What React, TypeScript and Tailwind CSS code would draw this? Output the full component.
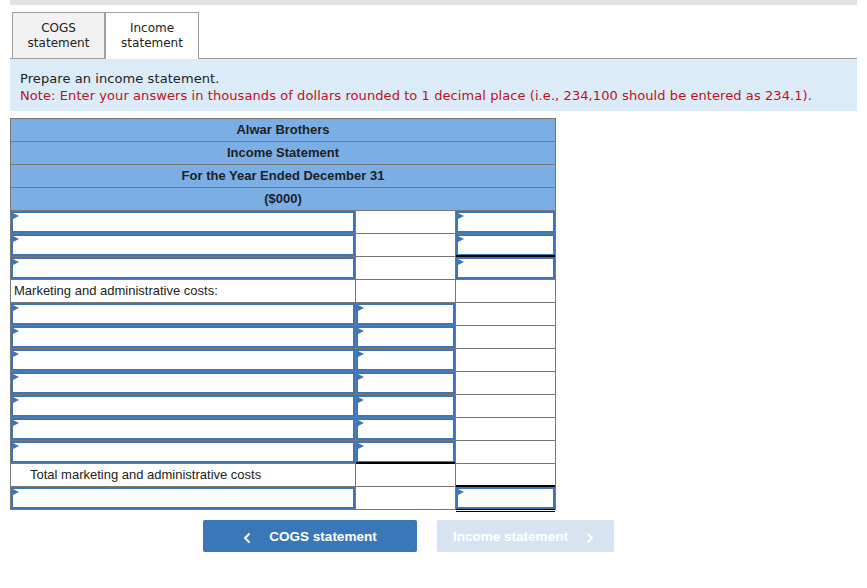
import { ChevronLeft, ChevronRight } from 'lucide-react'

type Cell = { input?: boolean; text?: string; indent?: boolean; topBlack?: boolean; dbl?: boolean }
type Row = [Cell, Cell, Cell]

const ROWS: Row[] = [
  [{ input: true }, {}, { input: true }],
  [{ input: true }, {}, { input: true }],
  [{ input: true }, {}, { input: true, topBlack: true }],
  [{ text: 'Marketing and administrative costs:' }, {}, {}],
  [{ input: true }, { input: true }, {}],
  [{ input: true }, { input: true }, {}],
  [{ input: true }, { input: true }, {}],
  [{ input: true }, { input: true }, {}],
  [{ input: true }, { input: true }, {}],
  [{ input: true }, { input: true }, {}],
  [{ input: true }, { input: true }, {}],
  [{ text: 'Total marketing and administrative costs', indent: true }, { topBlack: true }, {}],
  [{ input: true }, {}, { input: true, topBlack: true, dbl: true }],
]

const WIDTHS = ['w-[345px]', 'w-[100px]', 'w-[99px]']

function InputBox() {
  return (
    <div className="relative w-full h-full border-2 border-[#3f74b5] bg-white">
      <span className="absolute left-0 top-0 w-0 h-0 border-y-[3px] border-y-transparent border-l-[6px] border-l-[#3f74b5]" />
    </div>
  )
}

function BodyCell({ cell, i }: { cell: Cell; i: number }) {
  return (
    <div className={`relative h-full shrink-0 ${WIDTHS[i]} ${i < 2 ? 'border-r border-[#777]' : ''}`}>
      {cell.topBlack && <div className="absolute -top-[2px] left-0 right-0 h-[2px] bg-black z-10" />}
      {cell.input && <InputBox />}
      {cell.text && (
        <div className={`h-full flex items-center text-[13px] text-[#222] ${cell.indent ? 'pl-[19px]' : 'pl-[3px]'}`}>{cell.text}</div>
      )}
      {cell.dbl && <div className="absolute -bottom-[3px] left-0 right-0 h-[3px] border-y border-black z-10" />}
    </div>
  )
}

export default function App() {
  return (
    <div className="w-[867px] h-[588px] bg-white" style={{ fontFamily: 'Arial, "Liberation Sans", sans-serif' }}>
      <div className="mx-[10px] h-[5px] bg-[#e2e2e2]" />

      <div className="mx-[10px] mt-[7px] border-b border-[#a0a0a0] flex pl-[2px]" style={{ fontFamily: 'Verdana, "DejaVu Sans", sans-serif' }}>
        <div className="w-[93px] h-[46px] bg-[#f2f2f2] border border-b-0 border-[#a0a0a0] flex items-center justify-center text-center text-[12px] leading-[15px] text-[#222]">
          COGS<br />statement
        </div>
        <div className="w-[94px] h-[47px] -mb-px bg-white border border-b-0 border-[#a0a0a0] flex items-center justify-center text-center text-[12px] leading-[15px] text-[#222]">
          Income<br />statement
        </div>
      </div>

      <div className="mx-[10px] h-[52px] bg-[#dbebf8] px-[10px] pt-[11px] text-[13px] leading-[17px] tracking-[0.08px]" style={{ fontFamily: 'Verdana, "DejaVu Sans", sans-serif' }}>
        <div className="text-[#222]">Prepare an income statement.</div>
        <div className="text-[#c0101a]">Note: Enter your answers in thousands of dollars rounded to 1 decimal place (i.e., 234,100 should be entered as 234.1).</div>
      </div>

      <div className="ml-[10px] mt-[7px] w-[546px] border-x border-t border-[#777]">
        {['Alwar Brothers', 'Income Statement', 'For the Year Ended December 31', '($000)'].map((t) => (
          <div key={t} className="h-[23px] bg-[#7aaee5] border-b border-[#777] flex items-center justify-center font-bold text-[13px] text-[#1e1e1e]">
            {t}
          </div>
        ))}
        {ROWS.map((row, r) => (
          <div key={r} className="h-[23px] flex border-b border-[#777]">
            {row.map((c, i) => <BodyCell key={i} cell={c} i={i} />)}
          </div>
        ))}
      </div>

      <div className="flex gap-[20px] ml-[203px] mt-[10px]">
        <button className="w-[214px] h-[32px] rounded-[2px] bg-[#3a77b9] text-white font-bold text-[13.5px] flex items-center justify-center gap-[14px] pr-[4px] pt-[3px]">
          <ChevronLeft size={16} strokeWidth={3} />
          COGS statement
        </button>
        <button className="w-[177px] h-[32px] rounded-[2px] bg-[#d8e3f1] text-white font-bold text-[13.5px] flex items-center justify-center gap-[14px] pt-[3px]">
          Income statement
          <ChevronRight size={16} strokeWidth={3} />
        </button>
      </div>
    </div>
  )
}
